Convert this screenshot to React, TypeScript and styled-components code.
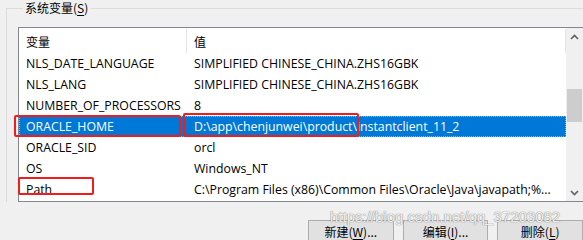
import React from 'react';
import styled, { createGlobalStyle } from 'styled-components';

const GlobalStyle = createGlobalStyle`
  html, body {
    margin: 0;
    padding: 0;
    background: #f0f0f0;
  }
  body {
    font-family: 'Open Sans', 'Noto Sans CJK SC', sans-serif;
    font-size: 12.3px;
    color: #000;
  }
`;

const Page = styled.div`
  position: relative;
  width: 583px;
  height: 240px;
  overflow: hidden;
  background: #f0f0f0;
`;

const GroupBox = styled.fieldset`
  margin: 0 0 0 6px;
  padding: 11px 0 0 11px;
  border: 1px solid #dcdcdc;
  border-right: none;
  border-bottom: none;
  min-width: 0;
  width: 600px;
  box-sizing: border-box;
`;

const Legend = styled.legend`
  margin-left: 5px;
  padding: 0 3px 0 2px;
  line-height: 16px;
  font-family: 'Noto Sans CJK SC', sans-serif;
  font-size: 12px;
`;

const Accel = styled.span`
  text-decoration: underline;
  text-underline-offset: 2px;
`;

const ListView = styled.div`
  display: flex;
  width: 570px;
  height: 173px;
  border: 1px solid #828790;
  background: #fff;
`;

const Table = styled.div`
  width: 547px;
  display: flex;
  flex-direction: column;
`;

const HeaderRow = styled.div`
  display: flex;
  height: 25px;
  align-items: stretch;
  font-family: 'Noto Sans CJK SC', sans-serif;
  font-size: 12px;
`;

const HeaderCell = styled.div<{ $w?: number }>`
  width: ${(p) => (p.$w ? `${p.$w}px` : 'auto')};
  flex: ${(p) => (p.$w ? 'none' : '1')};
  padding-left: 7px;
  display: flex;
  align-items: center;
  box-sizing: border-box;
  border-right: 1px solid #e5e5e5;
  margin: 1px 0 0;
`;

const Row = styled.div<{ $selected?: boolean }>`
  display: flex;
  height: 21px;
  align-items: center;
  background: ${(p) => (p.$selected ? '#0078d7' : 'transparent')};
  color: ${(p) => (p.$selected ? '#fff' : '#000')};
  outline: ${(p) => (p.$selected ? '1px dotted #f3a23a' : 'none')};
  outline-offset: -1px;
  white-space: nowrap;
`;

const Cell = styled.div<{ $w?: number }>`
  width: ${(p) => (p.$w ? `${p.$w}px` : 'auto')};
  flex: ${(p) => (p.$w ? 'none' : '1')};
  padding-left: 7px;
  box-sizing: border-box;
  overflow: hidden;
`;

const ScrollBar = styled.div`
  width: 17px;
  background: #f0f0f0;
  display: flex;
  flex-direction: column;
  align-items: center;
`;

const Arrow = styled.div`
  height: 17px;
  width: 17px;
  display: flex;
  align-items: center;
  justify-content: center;
`;

const Track = styled.div`
  flex: 1;
  width: 17px;
  padding-top: 44px;
  box-sizing: border-box;
`;

const Thumb = styled.div`
  width: 15px;
  height: 33px;
  margin-left: 1px;
  background: #cdcdcd;
`;

const ButtonRow = styled.div`
  display: flex;
  gap: 9px;
  padding: 18px 0 0 308px;
`;

const Button = styled.div`
  width: 86px;
  height: 23px;
  box-sizing: border-box;
  border: 1px solid #adadad;
  background: #e1e1e1;
  display: flex;
  align-items: center;
  justify-content: center;
  font-family: 'Noto Sans CJK SC', sans-serif;
  font-size: 12px;
`;

const RedBox = styled.div`
  position: absolute;
  border: 2px solid #f11c1c;
  border-radius: 2px;
  box-sizing: border-box;
  pointer-events: none;
`;

const Watermark = styled.div`
  position: absolute;
  left: 330px;
  top: 208px;
  font-family: 'Liberation Sans', Arial, sans-serif;
  font-size: 15px;
  color: rgba(255, 255, 255, 0.9);
  text-shadow: 0 0 1px rgba(110, 110, 110, 0.9), 0 0 1px rgba(110, 110, 110, 0.6);
  pointer-events: none;
`;

const rows = [
  ['NLS_DATE_LANGUAGE', 'SIMPLIFIED CHINESE_CHINA.ZHS16GBK'],
  ['NLS_LANG', 'SIMPLIFIED CHINESE_CHINA.ZHS16GBK'],
  ['NUMBER_OF_PROCESSORS', '8'],
  ['ORACLE_HOME', 'D:\\app\\chenjunwei\\product\\instantclient_11_2'],
  ['ORACLE_SID', 'orcl'],
  ['OS', 'Windows_NT'],
  ['Path', 'C:\\Program Files (x86)\\Common Files\\Oracle\\Java\\javapath;%...'],
];

const Chevron = ({ up }: { up?: boolean }) => (
  <svg width="9" height="6" viewBox="0 0 9 6">
    <path
      d={up ? 'M1 5 L4.5 1.5 L8 5' : 'M1 1 L4.5 4.5 L8 1'}
      fill="none"
      stroke="#606060"
      strokeWidth="1.6"
    />
  </svg>
);

export default function App() {
  return (
    <Page>
      <GlobalStyle />
      <GroupBox>
        <Legend>
          系统变量(<Accel>S</Accel>)
        </Legend>
        <ListView>
          <Table>
            <HeaderRow>
              <HeaderCell $w={168}>变量</HeaderCell>
              <HeaderCell>值</HeaderCell>
            </HeaderRow>
            {rows.map(([name, value]) => (
              <Row key={name} $selected={name === 'ORACLE_HOME'}>
                <Cell $w={168}>{name}</Cell>
                <Cell>{value}</Cell>
              </Row>
            ))}
          </Table>
          <ScrollBar>
            <Arrow>
              <Chevron up />
            </Arrow>
            <Track>
              <Thumb />
            </Track>
            <Arrow>
              <Chevron />
            </Arrow>
          </ScrollBar>
        </ListView>
      </GroupBox>
      <ButtonRow>
        <Button>
          新建(<Accel>W</Accel>)...
        </Button>
        <Button>
          编辑(<Accel>I</Accel>)...
        </Button>
        <Button>
          删除(<Accel>L</Accel>)
        </Button>
      </ButtonRow>

      <RedBox style={{ left: 14, top: 115, width: 167, height: 22 }} />
      <RedBox style={{ left: 183, top: 113, width: 176, height: 24 }} />
      <RedBox style={{ left: 18, top: 177, width: 76, height: 18 }} />
      <Watermark>https://blog.csdn.net/qq_37203082</Watermark>
    </Page>
  );
}
